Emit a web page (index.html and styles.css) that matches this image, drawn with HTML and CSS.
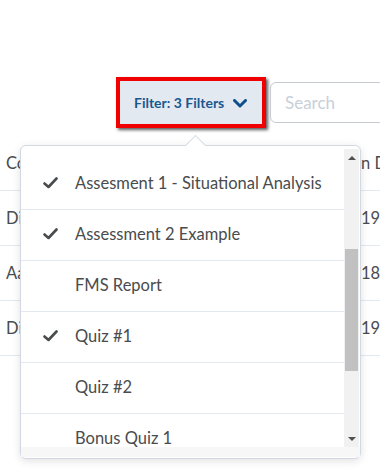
FILE: index.html
```html
<!DOCTYPE html>
<html>
<head>
<meta charset="utf-8">
<link rel="stylesheet" href="styles.css">
</head>
<body>
<div class="page">
  <div class="toolbar">
    <div class="highlight">
      <button class="filter-btn">
        <span class="filter-label">Filter: 3 Filters</span>
        <svg class="chev" width="14" height="9" viewBox="0 0 14 9"><polyline points="1.5,1.5 7,7 12.5,1.5" fill="none" stroke="#0f4f8c" stroke-width="3" stroke-linecap="round" stroke-linejoin="round"/></svg>
      </button>
    </div>
    <div class="search"><span class="placeholder">Search</span></div>
  </div>

  <div class="table">
    <div class="trow head"><span class="c1">Co</span><span class="c2">n D</span></div>
    <div class="trow"><span class="c1">Di</span><span class="c2">19</span></div>
    <div class="trow"><span class="c1">Aa</span><span class="c2">18</span></div>
    <div class="trow"><span class="c1">Di</span><span class="c2">19</span></div>
  </div>

  <div class="dropdown">
    <div class="pointer"></div>
    <div class="dd-body">
      <div class="list">
        <div class="item"><span class="check"><svg width="15" height="12" viewBox="0 0 15 12"><polyline points="1.5,6.5 5.5,10 13.5,1.5" fill="none" stroke="#494c4e" stroke-width="2.6" stroke-linecap="round" stroke-linejoin="round"/></svg></span><span class="label">Assesment 1 - Situational Analysis</span></div>
        <div class="item"><span class="check"><svg width="15" height="12" viewBox="0 0 15 12"><polyline points="1.5,6.5 5.5,10 13.5,1.5" fill="none" stroke="#494c4e" stroke-width="2.6" stroke-linecap="round" stroke-linejoin="round"/></svg></span><span class="label">Assessment 2 Example</span></div>
        <div class="item"><span class="check"></span><span class="label">FMS Report</span></div>
        <div class="item"><span class="check"><svg width="15" height="12" viewBox="0 0 15 12"><polyline points="1.5,6.5 5.5,10 13.5,1.5" fill="none" stroke="#494c4e" stroke-width="2.6" stroke-linecap="round" stroke-linejoin="round"/></svg></span><span class="label">Quiz #1</span></div>
        <div class="item"><span class="check"></span><span class="label">Quiz #2</span></div>
        <div class="item"><span class="check"></span><span class="label">Bonus Quiz 1</span></div>
      </div>
      <div class="scrollbar">
        <div class="arrow up"></div>
        <div class="track"><div class="thumb"></div></div>
        <div class="arrow down"></div>
      </div>
    </div>
    <div class="dd-foot"></div>
  </div>
</div>
</body>
</html>
```

FILE: styles.css
```css
html, body {
  margin: 0;
  padding: 0;
  background: #fff;
}
body {
  font-family: Lato, "Noto Sans", sans-serif;
  color: #494c4e;
  width: 380px;
  height: 474px;
  overflow: hidden;
}
.page {
  position: relative;
  width: 380px;
  height: 474px;
}
.toolbar {
  display: flex;
  align-items: center;
  gap: 4px;
  padding: 77px 0 0 116px;
  height: 51px;
}
.highlight {
  border: 4px solid #f00000;
  box-shadow: 2px 2px 3px rgba(0,0,0,0.65);
  height: 43px;
  box-sizing: content-box;
}
.filter-btn {
  display: flex;
  align-items: center;
  height: 43px;
  width: 142px;
  margin: 0;
  border: 0;
  padding: 0 0 0 14px;
  background: #e3e9f1;
  font-family: Lato, "Noto Sans", sans-serif;
  font-weight: bold;
  font-size: 14px;
  color: #19578f;
  box-sizing: border-box;
}
.chev {
  margin-left: 9px;
  margin-top: 2px;
}
.search {
  flex: none;
  width: 140px;
  height: 41px;
  box-sizing: border-box;
  border: 1px solid #c6cbd1;
  border-radius: 6px;
  display: flex;
  align-items: center;
  padding-left: 14px;
}
.placeholder {
  font-size: 17px;
  color: #c8d0d8;
}
.table {
  margin-top: 8px;
}
.trow {
  height: 55px;
  border-bottom: 1px solid #e3e9f1;
  display: flex;
  align-items: center;
  justify-content: space-between;
  font-size: 16.5px;
  color: #494c4e;
  padding: 0 0 0 6px;
  box-sizing: border-box;
}
.c2 {
  width: 19px;
  overflow: hidden;
  white-space: nowrap;
}
.dropdown {
  position: absolute;
  left: 20px;
  top: 145px;
  width: 341px;
  height: 314px;
  box-sizing: border-box;
  border: 1px solid #d3d9e3;
  border-radius: 6px;
  background: #fff;
  box-shadow: 0 2px 8px rgba(0,0,0,0.12);
  display: flex;
  flex-direction: column;
  padding: 3px 1px 0 0;
}
.pointer {
  position: absolute;
  top: -8px;
  left: 167px;
  width: 14px;
  height: 14px;
  background: #fff;
  border-left: 1px solid #d3d9e3;
  border-top: 1px solid #d3d9e3;
  transform: rotate(45deg);
}
.dd-body {
  display: flex;
  height: 298px;
  position: relative;
}
.list {
  flex: 1;
  overflow: hidden;
  padding-top: 10px;
}
.item {
  height: 51px;
  box-sizing: border-box;
  border-bottom: 1px solid #e3e9f1;
  display: flex;
  align-items: center;
  font-size: 16.5px;
  color: #494c4e;
  padding-bottom: 2px;
}
.check {
  width: 54px;
  padding-left: 22px;
  box-sizing: border-box;
  display: flex;
  align-items: center;
}
.scrollbar {
  width: 15px;
  background: #f1f1f1;
  display: flex;
  flex-direction: column;
}
.arrow {
  height: 17px;
  display: flex;
  align-items: center;
  justify-content: center;
}
.arrow.up::before {
  content: "";
  border-left: 4px solid transparent;
  border-right: 4px solid transparent;
  border-bottom: 4px solid #505050;
}
.arrow.down::before {
  content: "";
  border-left: 4px solid transparent;
  border-right: 4px solid transparent;
  border-top: 4px solid #505050;
}
.track {
  flex: 1;
  padding-top: 83px;
}
.thumb {
  width: 13px;
  margin-left: 1px;
  height: 122px;
  background: #c1c1c1;
}
.dd-foot {
  height: 10px;
  background: #f7f7f7;
  margin-right: -1px;
}
```
